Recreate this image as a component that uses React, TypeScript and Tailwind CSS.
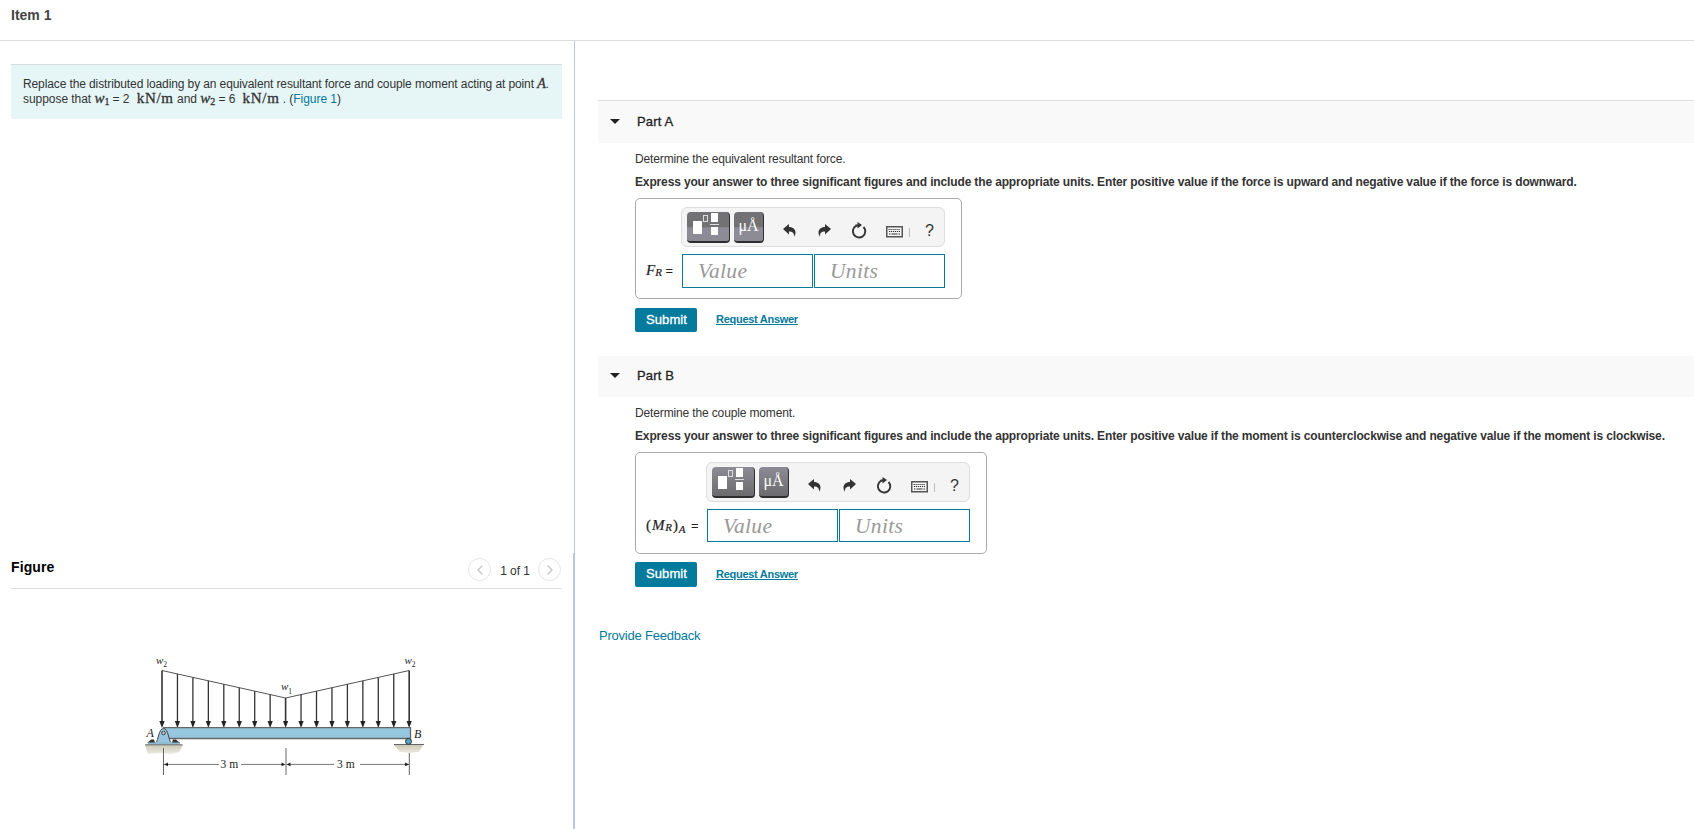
import clsx from 'clsx';
import { ChevronLeft, ChevronRight } from 'lucide-react';
import type { ReactNode } from 'react';

interface PartProps {
  title: string;
  task: string;
  hint: string;
  label: ReactNode;
  second?: boolean;
}

const mathFont = "font-['Liberation_Serif',serif]";

function TemplatesIcon() {
  return (
    <svg width="28" height="24" viewBox="0 0 28 24" aria-hidden="true">
      <rect x="1" y="9" width="9" height="13" fill="#fff" />
      <rect x="11.5" y="3.5" width="4" height="6" fill="none" stroke="#ddd" />
      <rect x="19" y="1" width="7" height="9" fill="#fff" />
      <rect x="18" y="12" width="9" height="1" fill="#ddd" />
      <rect x="19" y="15" width="7" height="8" fill="#fff" />
    </svg>
  );
}

function ArrowIcon({ flip }: { flip?: boolean }) {
  return (
    <svg width="13" height="13" viewBox="0 0 13 13" className={flip ? '-scale-x-100' : undefined} aria-hidden="true">
      <path d="M0 5 6 0v3c4 0 6.500 2.400 6.500 5.600 0 1.600-.6 3-1.400 4.200.2-3.600-1.400-5.300-5.100-5.300v3Z" fill="#333" />
    </svg>
  );
}

function ResetIcon() {
  return (
    <svg width="16" height="17" viewBox="0 0 16 17" aria-hidden="true">
      <path d="M5.500 3.700A6.200 6.200 0 1 0 12.500 5" fill="none" stroke="#333" strokeWidth="1.900" />
      <path d="M6.500 0v2.500H4.500v2H6.500V6.500L11 3Z" fill="#333" />
    </svg>
  );
}

function KeyboardIcon() {
  return (
    <svg width="17" height="12" viewBox="0 0 17 12" aria-hidden="true">
      <rect x=".75" y=".75" width="15.500" height="10" fill="#f6f6f6" stroke="#555" strokeWidth="1.500" />
      <path d="M2.500 3.500h12M3 5.500h11" stroke="#333" strokeWidth="1.200" strokeDasharray="1.200 .8" />
      <path d="M3 8h1.500M5.500 8h6M12.500 8h1.500" stroke="#333" strokeWidth="1.200" />
    </svg>
  );
}

function Toolbar({ second }: { second?: boolean }) {
  const keyClass = clsx(
    'flex h-[31px] rounded-[4px] border-r border-b-2 border-[#2e2e2e]',
    second
      ? 'bg-linear-to-b from-[#8d8b95] to-[#6c6c6e]'
      : 'bg-linear-to-b from-[#727274] from-52% to-[#8d8b95] to-54%',
  );

  return (
    <div className="flex h-10 w-[264px] items-center rounded-[6px] border border-[#ddd] bg-[#f4f4f4] pl-[5px]">
      <button type="button" aria-label="Templates" className={clsx(keyClass, 'w-[43px] shrink-0 pl-[5px]')}>
        <TemplatesIcon />
      </button>
      <button
        type="button"
        aria-label="Symbols"
        className={clsx(keyClass, mathFont, 'ml-1 w-[30px] shrink-0 justify-center pt-[3px] text-[16px] leading-[22px] text-white')}
      >
        μÅ
      </button>
      <span className="mt-[7px] ml-[19px]">
        <ArrowIcon />
      </span>
      <span className="mt-[7px] ml-[22px]">
        <ArrowIcon flip />
      </span>
      <span className="mt-[6px] ml-[20px]">
        <ResetIcon />
      </span>
      <span className="mt-[10px] ml-[19px]">
        <KeyboardIcon />
      </span>
      <span className="mt-[10px] ml-[6px] h-[9px] w-px bg-[#bbb]" />
      <span className="mt-[7px] ml-[15px] text-[16px] text-[#333]">?</span>
    </div>
  );
}

function Field({ text, short }: { text: string; short?: boolean }) {
  return (
    <div
      className={clsx(
        mathFont,
        'w-[131px] border border-[#047a9c] bg-white pl-[15px] text-[21.500px] tracking-[0.3px] text-[#999] italic',
        short ? 'h-[33px] leading-[33px]' : 'h-[34px] leading-[33px]',
      )}
    >
      {text}
    </div>
  );
}

function Part({ title, task, hint, label, second }: PartProps) {
  return (
    <section>
      <h2
        className={clsx(
          'flex items-center bg-[#f9f9f9] pl-[12px] text-[13px] font-normal tracking-[0.15px] text-[#222] [-webkit-text-stroke:0.3px_#222]',
          second ? 'h-[41px] pb-[2px]' : 'h-[43px] border-t border-[#ddd] pb-px',
        )}
      >
        <span className="mr-[17px] h-0 w-0 border-x-[5px] border-t-[5px] border-x-transparent border-t-[#222]" />
        {title}
      </h2>
      <div className="pl-[37px]">
        <p className="pt-[9px] text-[12px] leading-[15px] tracking-[-0.14px]">{task}</p>
        <p className="pt-2 text-[12px] leading-[15px] font-bold tracking-[-0.143px] whitespace-nowrap">{hint}</p>
        <div
          className={clsx(
            'mt-2 flex rounded-[5px] border border-[#aaa]',
            second ? 'h-[102px] w-[352px]' : 'h-[101px] w-[327px]',
          )}
        >
          <div className={clsx('shrink-0 pl-[10px] text-[#222]', second ? 'w-[70px] pt-[60px]' : 'w-[45px] pt-[59px]')}>{label}</div>
          <div className={second ? 'pt-[9px]' : 'pt-2'}>
            <Toolbar second={second} />
            <div className="flex gap-px pt-[7px] pl-px">
              <Field text="Value" short={second} />
              <Field text="Units" short={second} />
            </div>
          </div>
        </div>
        <div className={clsx('flex items-center', second ? 'mt-2' : 'mt-[9px]')}>
          <button
            type="button"
            className={clsx(
              'w-[62px] rounded-[2px] bg-[#047a9c] pb-px pl-px text-[13px] tracking-[0.1px] text-white [-webkit-text-stroke:0.3px_#fff]',
              second ? 'h-[25px]' : 'h-6',
            )}
          >
            Submit
          </button>
          <a href="#answer" className={clsx('ml-[19px] text-[11px] font-bold tracking-[-0.28px] text-[#047a9c] underline', !second && 'pb-[2px]')}>
            Request Answer
          </a>
        </div>
      </div>
    </section>
  );
}

function BeamFigure() {
  // arrow tops follow the load line: high at both ends, low in the middle
  const arrows = Array.from({ length: 17 }, (_, i) => ({
    x: 27 + i * 15.450,
    top: 30.500 + (8 - Math.abs(i - 8)) * 3.440,
  }));

  return (
    <svg width="300" height="145" viewBox="0 0 300 145" className={clsx(mathFont, 'fill-[#222]')} role="img" aria-label="Beam AB">
      <defs>
        <linearGradient id="ground" x2="0" y2="1">
          <stop stopColor="#cbc8b5" />
          <stop offset="1" stopColor="#eeece4" />
        </linearGradient>
      </defs>
      <path d="M10 105h38l-4 7-8 2-14-1-9 1Z" fill="url(#ground)" />
      <path d="M259 105h29l-4 7-9 1-10-1Z" fill="url(#ground)" />
      <path d="M27 30.500 150.600 58 274.200 30.500" fill="none" stroke="#555" />
      {arrows.map((arrow, i) => (
        <g key={arrow.x}>
          <path d={`M${arrow.x} ${arrow.top}V83`} stroke="#333" strokeWidth={i % 8 === 0 ? 1.600 : 1.300} />
          <path d={`M${arrow.x - 2.600} 81h5.200L${arrow.x} 88Z`} fill="#222" />
        </g>
      ))}
      <rect x="28" y="88" width="247.500" height="10.500" fill="#96c7de" />
      <path d="M28 87.700h248M28 98.500h248M275.500 87v12" stroke="#666" strokeWidth="1.300" />
      <path d="M21 102.500c2.500-2 2.500-14 7.500-14s5 12 7.500 14Z" fill="#96c7de" stroke="#444" />
      <circle cx="28.500" cy="93" r="1.800" fill="#c4c9cc" stroke="#444" />
      <path d="M13 102h32v2.500H13Z" fill="#8ebdd2" />
      <path d="M12 102.500l2-1 2-2h3l1 3ZM37 102.500l1-3h3l2 2 2 1Z" fill="#333" />
      <path d="M10 104.800h37.500M259 104.500h30" stroke="#666" />
      <circle cx="273.500" cy="101.400" r="3" fill="#55a5c5" stroke="#333" />
      <path d="M28.500 108v27M151 108v27M274.300 113v22" stroke="#666" />
      <path d="M29 124.400h55M106 124.400h42M153 124.400h46M225 124.400h49" stroke="#777" />
      <path d="m29 124.400 4-1.800v3.600ZM150.500 124.400l-4-1.800v3.600ZM151.500 124.400l4-1.800v3.600ZM274 124.400l-4-1.800v3.600Z" />
      <g fontSize="12" fontStyle="italic">
        <text x="11.500" y="96.500">A</text>
        <text x="279" y="97.500">B</text>
        <text x="21" y="24" fontSize="11">w<tspan dy="3" fontSize="7.500" fontStyle="normal">2</tspan></text>
        <text x="146" y="50" fontSize="11">w<tspan dy="4" fontSize="7.500" fontStyle="normal">1</tspan></text>
        <text x="269.500" y="24" fontSize="11">w<tspan dy="3" fontSize="7.500" fontStyle="normal">2</tspan></text>
      </g>
      <g fontSize="11.500">
        <text x="85.500" y="127.700">3 m</text>
        <text x="202" y="127.700">3 m</text>
      </g>
    </svg>
  );
}

function Variable({ index }: { index: number }) {
  return (
    <span className={clsx(mathFont, 'text-[15px] leading-none italic [-webkit-text-stroke:0.3px_#333]')}>
      w<sub className="bottom-[-2px] text-[10px] not-italic">{index}</sub>
    </span>
  );
}

function Unit() {
  return (
    <span className={clsx(mathFont, 'ml-1 text-[15px] leading-none tracking-[0.7px] [-webkit-text-stroke:0.3px_#333]')}>kN/m</span>
  );
}

export default function App() {
  return (
    <div className="flex h-[829px] flex-col overflow-hidden bg-white font-['Liberation_Sans',sans-serif] text-[#333]">
      <header className="h-[41px] shrink-0 border-b border-[#ddd] pt-[7px] pl-[11px]">
        <h1 className="text-[14px] leading-4 font-bold text-[#444]">Item 1</h1>
      </header>
      <div className="flex min-h-0 grow">
        <aside className="flex w-[575px] shrink-0 flex-col">
          <div className="h-[512px] border-r border-[#b9c8d8] pt-[23px] pl-[11px]">
            <div className="h-[55px] w-[551px] border-t border-[#d5dddd] bg-[#e6f6f7] pt-3 pl-3 text-[12px] leading-[15px] tracking-[-0.11px] whitespace-nowrap">
              <p className="h-[15px]">
                Replace the distributed loading by an equivalent resultant force and couple moment acting at point{' '}
                <i className={clsx(mathFont, 'text-[14px] leading-none [-webkit-text-stroke:0.3px_#333]')}>A</i>.
              </p>
              <p className="-mt-px h-[15px] tracking-[-0.05px]">
                suppose that <Variable index={1} /> = 2 <Unit /> and <Variable index={2} /> = 6 <Unit /> . (
                <a href="#figure" className="text-[#047a9c]">Figure 1</a>)
              </p>
            </div>
          </div>
          <div className="grow border-r-2 border-[#b9c8d8] pl-[11px]">
            <div className="flex h-9 w-[550px] items-start border-b border-[#ddd] pt-[5px]">
              <h2 className="grow pt-px text-[14px] leading-4 font-bold tracking-[0.1px] text-black">Figure</h2>
              <button type="button" aria-label="Previous" className="flex size-[23px] items-center justify-center rounded-full border border-[#e5e5e5] text-[#c4c4c4]">
                <ChevronLeft className="size-4" />
              </button>
              <span className="w-[47px] pt-[6px] pl-px text-center text-[12px] leading-[15px] tracking-[-0.1px]">1 of 1</span>
              <button type="button" aria-label="Next" className="flex size-[23px] items-center justify-center rounded-full border border-[#e5e5e5] text-[#c4c4c4]">
                <ChevronRight className="size-4" />
              </button>
            </div>
            <div className="pt-[51px] pl-[124px]">
              <BeamFigure />
            </div>
          </div>
        </aside>
        <main className="min-w-0 grow pt-[59px] pl-[23px]">
          <div className="h-[256px]">
            <Part
              title="Part A"
              task="Determine the equivalent resultant force."
              hint="Express your answer to three significant figures and include the appropriate units. Enter positive value if the force is upward and negative value if the force is downward."
              label={
                <span className={clsx(mathFont, 'text-[15px] whitespace-nowrap italic [-webkit-text-stroke:0.2px_#222]')}>
                  F<sub className="bottom-[-1px] text-[11px]">R</sub>{' '}
                  <span className="font-['Liberation_Sans',sans-serif] text-[12px] not-italic">=</span>
                </span>
              }
            />
          </div>
          <Part
            second
            title="Part B"
            task="Determine the couple moment."
            hint="Express your answer to three significant figures and include the appropriate units. Enter positive value if the moment is counterclockwise and negative value if the moment is clockwise."
            label={
              <span className={clsx(mathFont, 'text-[15px] tracking-[0.9px] whitespace-nowrap italic [-webkit-text-stroke:0.2px_#222]')}>
                <span className="not-italic">(</span>M<sub className="bottom-[-1px] text-[11px]">R</sub>
                <span className="not-italic">)</span>
                <sub className="bottom-[-3px] text-[11px]">A</sub>{' '}
                <span className="font-['Liberation_Sans',sans-serif] text-[12px] not-italic">=</span>
              </span>
            }
          />
          <a href="#feedback" className="mt-[41px] ml-px block text-[13px] leading-4 tracking-[-0.22px] text-[#047a9c]">
            Provide Feedback
          </a>
        </main>
      </div>
    </div>
  );
}
